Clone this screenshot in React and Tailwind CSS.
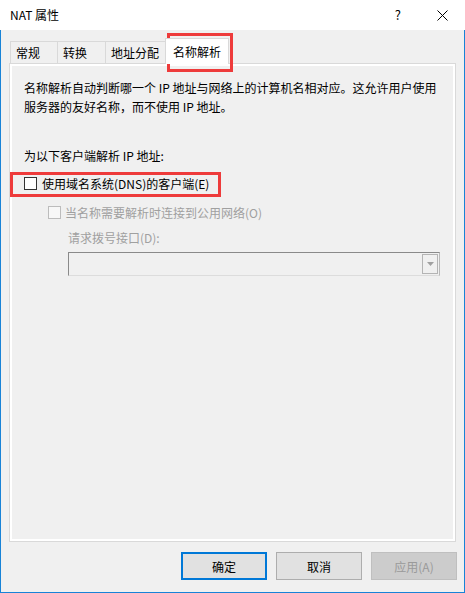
import React from "react";

const fontCn = { fontFamily: '"Noto Sans CJK SC", "Liberation Sans", sans-serif' };

function Tab({ label, width, selected, first }) {
  if (selected) {
    return (
      <div
        className={`relative z-10 -mb-px -ml-px flex h-[26px] items-start border-x border-t border-[#d9d9d9] bg-white pl-[7px] pt-[3px] ${width}`}
      >
        <span className="leading-[19px]">{label}</span>
      </div>
    );
  }
  return (
    <div
      className={`flex h-[22px] items-start border-x border-t border-[#d9d9d9] bg-[#f0f0f0] pl-[5px] pt-[1px] ${width} ${first ? "" : "-ml-px"}`}
    >
      <span className="leading-[19px]">{label}</span>
    </div>
  );
}

function Checkbox({ disabled }) {
  return (
    <span
      className={`block h-[13px] w-[13px] shrink-0 border ${
        disabled ? "border-[#bcbcbc] bg-[#f7f7f7]" : "border-[#333333] bg-white"
      }`}
    />
  );
}

export default function App() {
  return (
    <div
      className="relative flex h-[593px] w-[465px] flex-col overflow-hidden bg-white text-[12px] text-black"
      style={fontCn}
    >
      {/* title bar */}
      <div className="flex h-[30px] shrink-0 items-center bg-white pl-[10px]">
        <span className="leading-[16px]">NAT 属性</span>
        <span className="ml-auto mr-[36px] text-[13px] leading-[16px]">?</span>
        <svg width="11" height="11" viewBox="0 0 11 11" className="mr-[17px]">
          <path d="M0.5 0.5 L10.5 10.5 M10.5 0.5 L0.5 10.5" stroke="#000" strokeWidth="1" />
        </svg>
      </div>

      {/* window body */}
      <div className="flex flex-1 flex-col border-x border-b border-[#1883d7] bg-[#f0f0f0] px-[8px] pt-[8px] pb-[12px]">
        {/* tabs */}
        <div className="flex h-[25px] items-end pl-[1px]">
          <Tab label="常规" width="w-[48px]" first />
          <Tab label="转换" width="w-[49px]" />
          <Tab label="地址分配" width="w-[61px]" />
          <Tab label="名称解析" width="w-[64px]" selected />
        </div>

        {/* tab panel */}
        <div className="flex h-[479px] flex-col border border-[#d9d9d9] bg-white p-[2px]">
          <div className="flex flex-1 flex-col bg-[#f0f0f0] pl-[12px] pt-[12px]">
            <p className="leading-[19px]">
              名称解析自动判断哪一个 IP 地址与网络上的计算机名相对应。这允许用户使用
              <br />
              服务器的友好名称，而不使用 IP 地址。
            </p>

            <p className="mt-[30px] leading-[19px]">为以下客户端解析 IP 地址:</p>

            <div className="mt-[9px] flex h-[19px] items-center gap-[5px]">
              <Checkbox />
              <span className="leading-[19px]">使用域名系统(DNS)的客户端(E)</span>
            </div>

            <div className="ml-[24px] mt-[10px] flex h-[19px] items-center gap-[4px] text-[#a0a0a0]">
              <Checkbox disabled />
              <span className="leading-[19px]">当名称需要解析时连接到公用网络(O)</span>
            </div>

            <p className="ml-[44px] mt-[6px] leading-[19px] text-[#a0a0a0]">请求拨号接口(D):</p>

            <div className="ml-[44px] mt-[5px] flex h-[24px] w-[372px] items-center justify-end border border-[#8a8a8a] border-r-[#b9b9b9] border-b-[#dcdcdc] bg-[#f0f0f0] pr-[1px]">
              <div className="flex h-[20px] w-[16px] items-center justify-center border border-[#b4b4b4] bg-[#f0f0f0]">
                <svg width="7" height="4" viewBox="0 0 7 4">
                  <path d="M0 0 L7 0 L3.5 4 Z" fill="#a0a0a0" />
                </svg>
              </div>
            </div>
          </div>
        </div>

        {/* buttons */}
        <div className="mt-[10px] flex justify-end gap-[9px] pr-[-1px]">
          <button className="h-[28px] w-[86px] border-2 border-[#0078d7] bg-[#e1e1e1] leading-[19px]">
            确定
          </button>
          <button className="h-[28px] w-[86px] border border-[#adadad] bg-[#e1e1e1] leading-[19px]">
            取消
          </button>
          <button className="mr-[-1px] h-[28px] w-[86px] border border-[#bfbfbf] bg-[#cccccc] leading-[19px] text-[#9a9a9a]">
            应用(A)
          </button>
        </div>
      </div>

      {/* annotation boxes */}
      <div className="pointer-events-none absolute left-[167px] top-[33px] h-[39px] w-[66px] border-[3px] border-[#ee3b3b]" />
      <div className="pointer-events-none absolute left-[10px] top-[172px] h-[25px] w-[211px] border-[3px] border-[#ee3b3b]" />
    </div>
  );
}
